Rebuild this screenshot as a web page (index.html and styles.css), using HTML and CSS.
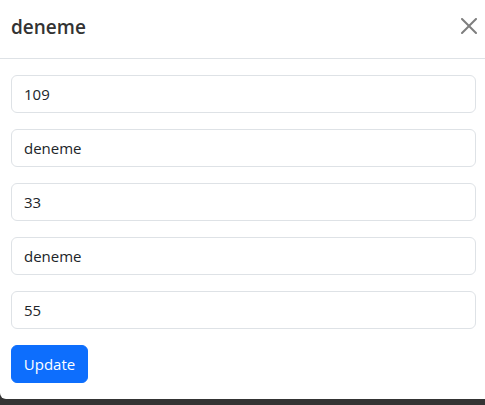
FILE: index.html
```html
<!DOCTYPE html>
<html lang="tr">
<head>
<meta charset="utf-8">
<title>deneme</title>
<link rel="stylesheet" href="styles.css">
</head>
<body>
<div class="modal">
  <div class="modal-header">
    <h5 class="modal-title">deneme</h5>
    <button class="btn-close" type="button" aria-label="Close">
      <svg viewBox="0 0 16 16" width="16" height="16"><path d="M.293.293a1 1 0 0 1 1.414 0L8 6.586 14.293.293a1 1 0 1 1 1.414 1.414L9.414 8l6.293 6.293a1 1 0 0 1-1.414 1.414L8 9.414l-6.293 6.293a1 1 0 0 1-1.414-1.414L6.586 8 .293 1.707a1 1 0 0 1 0-1.414z" fill="#000"/></svg>
    </button>
  </div>
  <div class="modal-body">
    <input class="form-control" type="text" value="109">
    <input class="form-control" type="text" value="deneme">
    <input class="form-control" type="text" value="33">
    <input class="form-control" type="text" value="deneme">
    <input class="form-control" type="text" value="55">
    <button class="btn-primary" type="button">Update</button>
  </div>
</div>
</body>
</html>
```
FILE: styles.css
```css
html, body {
  margin: 0;
  padding: 0;
  height: 100%;
}
body {
  background: #343434;
  font-family: "Open Sans", "Noto Sans", sans-serif;
  color: #212529;
  overflow: hidden;
}
.modal {
  background: #fff;
  width: 100%;
  border-bottom-left-radius: 6px;
}
.modal-header {
  height: 59px;
  box-sizing: border-box;
  border-bottom: 1px solid #dee2e6;
  display: flex;
  align-items: center;
  justify-content: space-between;
  padding: 0 8px 0 11px;
}
.modal-title {
  margin: 0;
  font-size: 19px;
  font-weight: 600;
  line-height: 1;
  color: #333;
  position: relative;
  top: -2px;
}
.btn-close {
  border: 0;
  background: transparent;
  padding: 0;
  width: 16px;
  height: 16px;
  opacity: 0.5;
  display: flex;
  position: relative;
  top: -3px;
}
.btn-close svg {
  display: block;
}
.modal-body {
  padding: 16px 9px 16px 11px;
  display: flex;
  flex-direction: column;
  align-items: flex-start;
  gap: 16px;
}
.form-control {
  box-sizing: border-box;
  width: 100%;
  height: 38px;
  margin: 0;
  padding: 6px 12px;
  font-family: inherit;
  font-size: 15px;
  color: #212529;
  background: #fff;
  border: 1px solid #dee2e6;
  border-radius: 6px;
  outline: none;
}
.btn-primary {
  box-sizing: border-box;
  height: 38px;
  width: 77px;
  padding: 0;
  font-family: inherit;
  font-size: 15px;
  color: #fff;
  background: #0d6efd;
  border: 1px solid #0d6efd;
  border-radius: 6px;
}
```
